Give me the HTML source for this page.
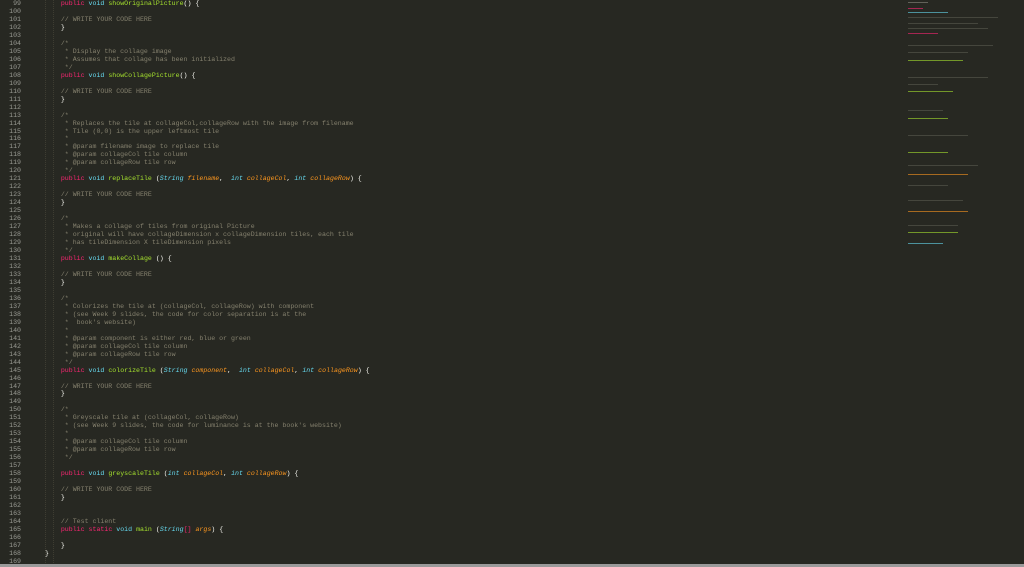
<!DOCTYPE html>
<html><head><meta charset="utf-8"><style>
html,body{margin:0;padding:0;background:#272822;width:1024px;height:567px;overflow:hidden;position:relative}
pre{margin:0;font-family:"Liberation Mono",monospace;font-size:6.6px;line-height:7.97px;position:absolute;top:0}
#g{left:0;width:21px;text-align:right;color:#9a9b94}
#c{left:45px;color:#f8f8f2}
.k{color:#f92672}.t{color:#66d9ef}.ti{color:#66d9ef;font-style:italic}.f{color:#a6e22e}.p{color:#fd971f;font-style:italic}.cm{color:#85816e}
.guide{position:absolute;top:0;height:563px;border-left:1px dotted #3e3d32}
#mm{position:absolute;left:905px;top:0;width:100px;height:250px;opacity:.6}
#mm div{position:absolute;height:1px}
#bar{position:absolute;left:0;bottom:0;width:1024px;height:3px;background:#9a9a9a}
</style></head><body>
<div class="guide" style="left:45px"></div>
<div class="guide" style="left:53px"></div>
<pre id="g">99
100
101
102
103
104
105
106
107
108
109
110
111
112
113
114
115
116
117
118
119
120
121
122
123
124
125
126
127
128
129
130
131
132
133
134
135
136
137
138
139
140
141
142
143
144
145
146
147
148
149
150
151
152
153
154
155
156
157
158
159
160
161
162
163
164
165
166
167
168
169</pre>
<pre id="c">    <span class="k">public</span> <span class="t">void</span> <span class="f">showOriginalPicture</span>() {

    <span class="cm">// WRITE YOUR CODE HERE</span>
    }

    <span class="cm">/*
     * Display the collage image
     * Assumes that collage has been initialized
     */</span>
    <span class="k">public</span> <span class="t">void</span> <span class="f">showCollagePicture</span>() {

    <span class="cm">// WRITE YOUR CODE HERE</span>
    }

    <span class="cm">/*
     * Replaces the tile at collageCol,collageRow with the image from filename
     * Tile (0,0) is the upper leftmost tile
     *
     * @param filename image to replace tile
     * @param collageCol tile column
     * @param collageRow tile row
     */</span>
    <span class="k">public</span> <span class="t">void</span> <span class="f">replaceTile</span> (<span class="ti">String</span> <span class="p">filename</span>,  <span class="ti">int</span> <span class="p">collageCol</span>, <span class="ti">int</span> <span class="p">collageRow</span>) {

    <span class="cm">// WRITE YOUR CODE HERE</span>
    }

    <span class="cm">/*
     * Makes a collage of tiles from original Picture
     * original will have collageDimension x collageDimension tiles, each tile
     * has tileDimension X tileDimension pixels
     */</span>
    <span class="k">public</span> <span class="t">void</span> <span class="f">makeCollage</span> () {

    <span class="cm">// WRITE YOUR CODE HERE</span>
    }

    <span class="cm">/*
     * Colorizes the tile at (collageCol, collageRow) with component
     * (see Week 9 slides, the code for color separation is at the
     *  book's website)
     *
     * @param component is either red, blue or green
     * @param collageCol tile column
     * @param collageRow tile row
     */</span>
    <span class="k">public</span> <span class="t">void</span> <span class="f">colorizeTile</span> (<span class="ti">String</span> <span class="p">component</span>,  <span class="ti">int</span> <span class="p">collageCol</span>, <span class="ti">int</span> <span class="p">collageRow</span>) {

    <span class="cm">// WRITE YOUR CODE HERE</span>
    }

    <span class="cm">/*
     * Greyscale tile at (collageCol, collageRow)
     * (see Week 9 slides, the code for luminance is at the book's website)
     *
     * @param collageCol tile column
     * @param collageRow tile row
     */</span>

    <span class="k">public</span> <span class="t">void</span> <span class="f">greyscaleTile</span> (<span class="ti">int</span> <span class="p">collageCol</span>, <span class="ti">int</span> <span class="p">collageRow</span>) {

    <span class="cm">// WRITE YOUR CODE HERE</span>
    }


    <span class="cm">// Test client</span>
    <span class="k">public</span> <span class="k">static</span> <span class="t">void</span> <span class="f">main</span> (<span class="ti">String</span><span class="k">[]</span> <span class="p">args</span>) {

    }
}
</pre>
<div id="mm">
<div style="left:3px;top:2px;width:20px;background:#8a8a80"></div>
<div style="left:3px;top:8px;width:15px;background:#f92672"></div>
<div style="left:3px;top:12px;width:40px;background:#66d9ef"></div>
<div style="left:3px;top:17px;width:90px;background:#5a5a50"></div>
<div style="left:3px;top:23px;width:70px;background:#5a5a50"></div>
<div style="left:3px;top:28px;width:80px;background:#5a5a50"></div>
<div style="left:3px;top:33px;width:30px;background:#f92672"></div>
<div style="left:3px;top:45px;width:85px;background:#5a5a50"></div>
<div style="left:3px;top:52px;width:60px;background:#5a5a50"></div>
<div style="left:3px;top:60px;width:55px;background:#a6e22e"></div>
<div style="left:3px;top:77px;width:80px;background:#5a5a50"></div>
<div style="left:3px;top:84px;width:30px;background:#5a5a50"></div>
<div style="left:3px;top:91px;width:45px;background:#a6e22e"></div>
<div style="left:3px;top:110px;width:35px;background:#5a5a50"></div>
<div style="left:3px;top:118px;width:40px;background:#a6e22e"></div>
<div style="left:3px;top:135px;width:60px;background:#5a5a50"></div>
<div style="left:3px;top:152px;width:40px;background:#a6e22e"></div>
<div style="left:3px;top:165px;width:70px;background:#5a5a50"></div>
<div style="left:3px;top:174px;width:60px;background:#fd971f"></div>
<div style="left:3px;top:185px;width:40px;background:#5a5a50"></div>
<div style="left:3px;top:200px;width:55px;background:#5a5a50"></div>
<div style="left:3px;top:211px;width:60px;background:#fd971f"></div>
<div style="left:3px;top:225px;width:50px;background:#5a5a50"></div>
<div style="left:3px;top:232px;width:50px;background:#a6e22e"></div>
<div style="left:3px;top:243px;width:35px;background:#66d9ef"></div>
</div>
<div id="bar"></div>
</body></html>
